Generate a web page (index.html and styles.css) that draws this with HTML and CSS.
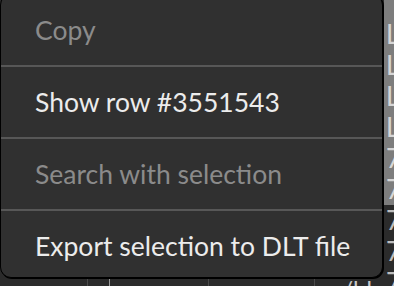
FILE: index.html
```html
<!DOCTYPE html>
<html>
<head>
<meta charset="utf-8">
<link rel="stylesheet" href="styles.css">
</head>
<body>
<div class="screen">
  <div class="table">
    <div class="cell c1"></div>
    <div class="cell c2"></div>
    <div class="cell c3"></div>
    <div class="cell c4"></div>
    <div class="cell c5"><span class="frag">/bb</span></div>
    <div class="col">
      <div class="crow gray top"></div>
      <div class="crow gray">L</div>
      <div class="crow gray">L</div>
      <div class="crow gray">L</div>
      <div class="crow gray">L</div>
      <div class="crow gray">7</div>
      <div class="crow gray">7</div>
      <div class="crow">7</div>
      <div class="crow">7</div>
      <div class="crow">7</div>
    </div>
  </div>
  <div class="menu">
    <div class="item disabled">Copy</div>
    <div class="sep"></div>
    <div class="item">Show row #3551543</div>
    <div class="sep"></div>
    <div class="item disabled">Search with selection</div>
    <div class="sep"></div>
    <div class="item last">Export selection to DLT file</div>
  </div>
</div>
</body>
</html>
```
FILE: styles.css
```css
html, body {
  margin: 0;
  padding: 0;
  background: #2b2b2b;
}
.screen {
  position: relative;
  width: 394px;
  height: 286px;
  overflow: hidden;
  font-family: Lato, "Noto Sans", sans-serif;
}
.table {
  display: flex;
  height: 286px;
}
.cell {
  border-right: 1px solid #4a4a4a;
  position: relative;
}
.c1 { width: 87px; }
.c2 { width: 21px; border-right-color: #9a9a9a; }
.c3 { width: 98px; }
.c4 { width: 105px; }
.c5 {
  flex: 1;
  border-right: none;
  display: flex;
  align-items: flex-end;
  justify-content: flex-end;
}
.frag {
  color: #c8c8c8;
  font-size: 24px;
  line-height: 1;
  margin-bottom: -15px;
  margin-right: 4px;
}
.col {
  width: 10px;
  display: flex;
  flex-direction: column;
  overflow: hidden;
}
.crow {
  height: 31px;
  flex: none;
  color: #bdbdbd;
  font-size: 26px;
  line-height: 31px;
  padding-left: 2px;
  white-space: nowrap;
}
.crow.gray {
  background: #7d7d7d;
  color: #d6d6d6;
}
.crow.top { height: 19px; }
.menu {
  position: absolute;
  left: 0;
  top: -6px;
  width: 383px;
  height: 284px;
  box-sizing: border-box;
  background: #303030;
  border: 1px solid #000;
  border-radius: 11px;
  box-shadow: 1px 1px 0 #000;
  overflow: hidden;
  display: flex;
  flex-direction: column;
}
.item {
  height: 70px;
  flex: none;
  line-height: 70px;
  padding-left: 34px;
  font-size: 26.5px;
  color: #ececec;
  white-space: nowrap;
}
.item.disabled { color: #8b8b8b; }
.item.last { flex: 1; }
.sep {
  height: 2px;
  flex: none;
  background: #575757;
}
```
